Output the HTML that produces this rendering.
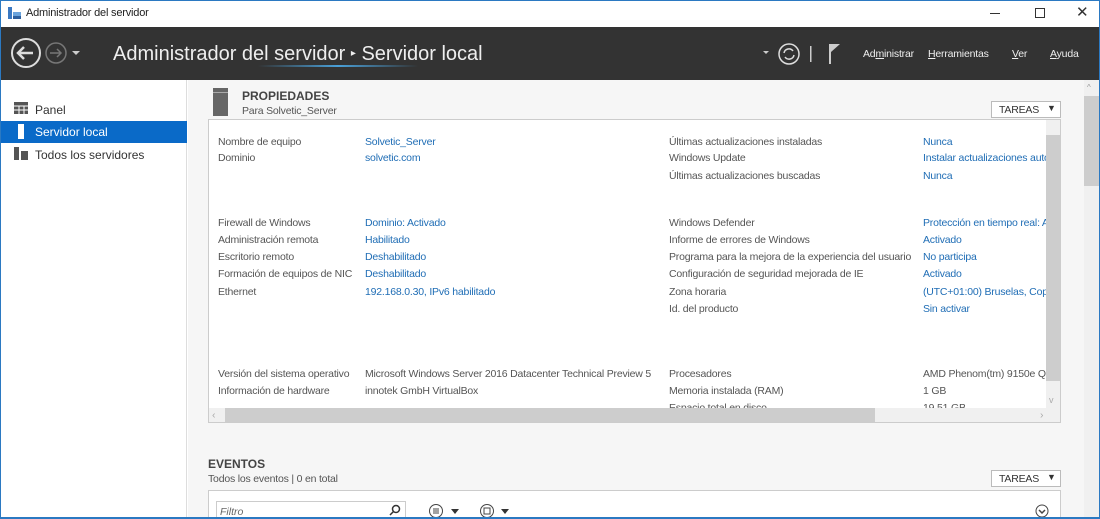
<!DOCTYPE html>
<html><head><meta charset="utf-8"><style>
*{margin:0;padding:0;box-sizing:border-box}
body{width:1100px;height:519px;overflow:hidden;font-family:"Liberation Sans",sans-serif;background:#fff;position:relative}
.abs{position:absolute;white-space:nowrap}
.t{font-size:10.5px;color:#555;letter-spacing:-0.2px}
.l{font-size:10.5px;color:#1f6db5;letter-spacing:-0.2px}
.m{font-size:10.5px;color:#eee;letter-spacing:-0.2px}
</style></head><body>
<div class="abs" style="left:0;top:0;width:1100px;height:519px;border:1px solid #2b79c2;border-bottom:none"></div>
<svg class="abs" style="left:8px;top:7px" width="14" height="13"><rect x="0" y="0" width="4" height="12" fill="#3a78c2"/><rect x="5" y="5" width="8" height="7" fill="#6aa3dc"/><rect x="5" y="9" width="8" height="3" fill="#2d5f9e"/></svg>
<div class="abs" style="left:26px;top:7px;font-size:11px;color:#222;letter-spacing:-0.2px">Administrador del servidor</div>
<div class="abs" style="left:990px;top:13px;width:10px;height:1px;background:#333"></div>
<div class="abs" style="left:1035px;top:8px;width:10px;height:10px;border:1px solid #333"></div>
<div class="abs" style="left:1076px;top:3px;font-size:15px;color:#333">✕</div>
<div class="abs" style="left:1px;top:27px;width:1098px;height:53px;background:#333"></div>
<svg class="abs" style="left:10px;top:37px" width="75" height="34">
<circle cx="16" cy="16" r="14" fill="none" stroke="#ddd" stroke-width="2"/>
<path d="M23 16H9M14 10l-6 6 6 6" fill="none" stroke="#ddd" stroke-width="2.5"/>
<circle cx="46" cy="16" r="10" fill="none" stroke="#777" stroke-width="1.5"/>
<path d="M40 16h11M47 12l4 4-4 4" fill="none" stroke="#777" stroke-width="1.5"/>
<path d="M62 14h8l-4 4z" fill="#ccc"/></svg>
<div class="abs" style="left:113px;top:43px;font-size:20px;color:#eee">Administrador del servidor <span style="font-size:10px;position:relative;top:-4px">▸</span> Servidor local</div>
<div class="abs" style="left:258px;top:65px;width:160px;height:2px;background:linear-gradient(90deg,transparent,#4aa0d8,transparent)"></div>
<svg class="abs" style="left:760px;top:42px" width="80" height="24">
<path d="M3 9h6l-3 3z" fill="#ccc"/>
<circle cx="29" cy="12" r="10" fill="none" stroke="#ddd" stroke-width="1.5"/>
<path d="M24 11a5 5 0 0 1 9-2M34 13a5 5 0 0 1-9 2" fill="none" stroke="#ddd" stroke-width="1.5"/>
<rect x="50" y="4" width="1.5" height="16" fill="#ccc"/>
<path d="M70 2v20" stroke="#ccc" stroke-width="2"/><path d="M71 2l9 0-9 8z" fill="#ccc"/></svg>
<div class="abs m" style="left:863px;top:48px">Ad<u>m</u>inistrar</div>
<div class="abs m" style="left:928px;top:48px"><u>H</u>erramientas</div>
<div class="abs m" style="left:1012px;top:48px"><u>V</u>er</div>
<div class="abs m" style="left:1050px;top:48px"><u>A</u>yuda</div>
<div class="abs" style="left:1px;top:80px;width:186px;height:439px;background:#fff;border-right:1px solid #ddd"></div>
<svg class="abs" style="left:14px;top:102px" width="14" height="12"><rect width="14" height="12" fill="#555"/><path d="M0 4h14M0 8h14M5 4v8M10 4v8" stroke="#fff" stroke-width="1"/></svg>
<div class="abs" style="left:35px;top:103px;font-size:12px;color:#333">Panel</div>
<div class="abs" style="left:1px;top:121px;width:186px;height:22px;background:#0a6ac8"></div>
<div class="abs" style="left:18px;top:124px;width:6px;height:15px;background:#fff"></div>
<div class="abs" style="left:35px;top:125px;font-size:12px;color:#fff">Servidor local</div>
<svg class="abs" style="left:14px;top:147px" width="14" height="13"><rect x="0" y="0" width="5" height="13" fill="#555"/><rect x="7" y="4" width="7" height="9" fill="#555"/></svg>
<div class="abs" style="left:35px;top:148px;font-size:12px;color:#333">Todos los servidores</div>
<div class="abs" style="left:188px;top:80px;width:896px;height:439px;background:#f6f6f6"></div>
<div class="abs" style="left:1084px;top:80px;width:15px;height:439px;background:#f0f0f0"></div>
<div class="abs" style="left:1084px;top:96px;width:15px;height:90px;background:#cdcdcd"></div>
<div class="abs" style="left:1087px;top:83px;font-size:8px;color:#999">^</div>
<div class="abs" style="left:213px;top:88px;width:15px;height:28px;background:#666"></div>
<div class="abs" style="left:213px;top:92px;width:15px;height:1px;background:#aaa"></div>
<div class="abs" style="left:242px;top:89px;font-size:12px;font-weight:bold;color:#444">PROPIEDADES</div>
<div class="abs t" style="left:242px;top:105px">Para Solvetic_Server</div>
<div class="abs t" style="left:991px;top:101px;width:70px;height:17px;border:1px solid #bbb;background:#fff;color:#333;padding:2px 0 0 7px">TAREAS<span style="position:absolute;left:55px;top:1px;font-size:9px">▼</span></div>
<div class="abs" style="left:208px;top:119px;width:853px;height:304px;border:1px solid #ccc;background:#fff"></div>
<div class="abs" style="left:1046px;top:120px;width:14px;height:288px;background:#f0f0f0"></div>
<div class="abs" style="left:1046px;top:135px;width:14px;height:246px;background:#cdcdcd"></div>
<div class="abs" style="left:209px;top:408px;width:851px;height:14px;background:#f0f0f0"></div>
<div class="abs" style="left:225px;top:408px;width:650px;height:14px;background:#cdcdcd"></div>
<div class="abs t" style="left:212px;top:409px;color:#aaa">‹</div>
<div class="abs t" style="left:1040px;top:409px;color:#aaa">›</div>
<div class="abs t" style="left:1049px;top:395px;color:#aaa;font-size:9px">v</div>
<div style="position:absolute;left:209px;top:120px;width:837px;height:288px;overflow:hidden">
<div class="abs t" style="left:9px;top:16px">Nombre de equipo</div><div class="abs l" style="left:156px;top:16px">Solvetic_Server</div>
<div class="abs t" style="left:9px;top:32px">Dominio</div><div class="abs l" style="left:156px;top:32px">solvetic.com</div>
<div class="abs t" style="left:460px;top:16px">Últimas actualizaciones instaladas</div><div class="abs l" style="left:714px;top:16px">Nunca</div>
<div class="abs t" style="left:460px;top:32px">Windows Update</div><div class="abs l" style="left:714px;top:32px">Instalar actualizaciones automáticamente</div>
<div class="abs t" style="left:460px;top:50px">Últimas actualizaciones buscadas</div><div class="abs l" style="left:714px;top:50px">Nunca</div>
<div class="abs t" style="left:9px;top:97px">Firewall de Windows</div><div class="abs l" style="left:156px;top:97px">Dominio: Activado</div>
<div class="abs t" style="left:9px;top:114px">Administración remota</div><div class="abs l" style="left:156px;top:114px">Habilitado</div>
<div class="abs t" style="left:9px;top:131px">Escritorio remoto</div><div class="abs l" style="left:156px;top:131px">Deshabilitado</div>
<div class="abs t" style="left:9px;top:148px">Formación de equipos de NIC</div><div class="abs l" style="left:156px;top:148px">Deshabilitado</div>
<div class="abs t" style="left:9px;top:166px">Ethernet</div><div class="abs l" style="left:156px;top:166px">192.168.0.30, IPv6 habilitado</div>
<div class="abs t" style="left:460px;top:97px">Windows Defender</div><div class="abs l" style="left:714px;top:97px">Protección en tiempo real: Activado</div>
<div class="abs t" style="left:460px;top:114px">Informe de errores de Windows</div><div class="abs l" style="left:714px;top:114px">Activado</div>
<div class="abs t" style="left:460px;top:131px">Programa para la mejora de la experiencia del usuario</div><div class="abs l" style="left:714px;top:131px">No participa</div>
<div class="abs t" style="left:460px;top:148px">Configuración de seguridad mejorada de IE</div><div class="abs l" style="left:714px;top:148px">Activado</div>
<div class="abs t" style="left:460px;top:166px">Zona horaria</div><div class="abs l" style="left:714px;top:166px">(UTC+01:00) Bruselas, Copenhague</div>
<div class="abs t" style="left:460px;top:183px">Id. del producto</div><div class="abs l" style="left:714px;top:183px">Sin activar</div>
<div class="abs t" style="left:9px;top:248px">Versión del sistema operativo</div><div class="abs t" style="left:156px;top:248px">Microsoft Windows Server 2016 Datacenter Technical Preview 5</div>
<div class="abs t" style="left:9px;top:265px">Información de hardware</div><div class="abs t" style="left:156px;top:265px">innotek GmbH VirtualBox</div>
<div class="abs t" style="left:460px;top:248px">Procesadores</div><div class="abs t" style="left:714px;top:248px">AMD Phenom(tm) 9150e Quad-Core</div>
<div class="abs t" style="left:460px;top:265px">Memoria instalada (RAM)</div><div class="abs t" style="left:714px;top:265px">1 GB</div>
<div class="abs t" style="left:460px;top:282px">Espacio total en disco</div><div class="abs t" style="left:714px;top:282px">19,51 GB</div>
</div>
<div class="abs" style="left:208px;top:457px;font-size:12px;font-weight:bold;color:#444">EVENTOS</div>
<div class="abs t" style="left:208px;top:473px">Todos los eventos | 0 en total</div>
<div class="abs t" style="left:991px;top:470px;width:70px;height:17px;border:1px solid #bbb;background:#fff;color:#333;padding:2px 0 0 7px">TAREAS<span style="position:absolute;left:55px;top:1px;font-size:9px">▼</span></div>
<div class="abs" style="left:208px;top:490px;width:853px;height:29px;border:1px solid #ccc;border-bottom:none;background:#fff"></div>
<div class="abs" style="left:216px;top:501px;width:190px;height:18px;border:1px solid #ccc;background:#fff"></div>
<div class="abs" style="left:220px;top:506px;font-size:10.5px;font-style:italic;color:#666">Filtro</div>
<svg class="abs" style="left:389px;top:504px" width="12" height="12"><circle cx="7" cy="5" r="3.5" fill="none" stroke="#333" stroke-width="1.5"/><path d="M4.5 7.5L1 11" stroke="#333" stroke-width="1.5"/></svg>
<svg class="abs" style="left:428px;top:503px" width="90" height="16"><circle cx="8" cy="8" r="6.5" fill="none" stroke="#444"/><path d="M5 6h6M5 8h6M5 10h6" stroke="#444"/><path d="M23 6h8l-4 5z" fill="#333"/><circle cx="59" cy="8" r="6.5" fill="none" stroke="#444"/><rect x="56" y="5" width="6" height="6" fill="none" stroke="#444"/><path d="M73 6h8l-4 5z" fill="#333"/></svg>
<svg class="abs" style="left:1035px;top:504px" width="14" height="14"><circle cx="7" cy="7" r="6" fill="none" stroke="#444"/><path d="M4 6l3 3 3-3" fill="none" stroke="#444" stroke-width="1.5"/></svg>
<div class="abs" style="left:0;top:517px;width:1100px;height:2px;background:#2b79c2"></div>
</body></html>
